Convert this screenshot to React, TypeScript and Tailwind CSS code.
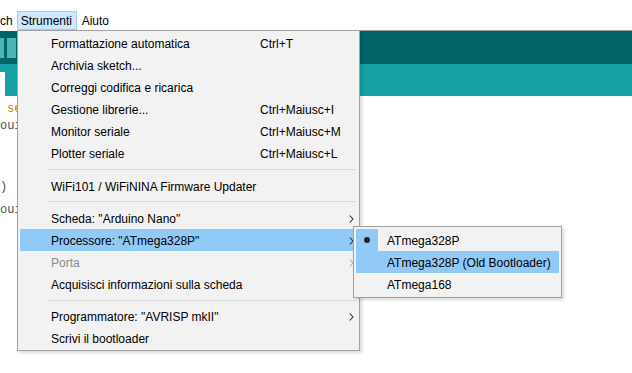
import React from 'react';

type Item =
    | { kind: 'item'; label: string; shortcut?: string; submenu?: boolean; disabled?: boolean; active?: boolean }
    | { kind: 'sep'; h: string };

const items: Item[] = [
    { kind: 'item', label: 'Formattazione automatica', shortcut: 'Ctrl+T' },
    { kind: 'item', label: 'Archivia sketch...' },
    { kind: 'item', label: 'Correggi codifica e ricarica' },
    { kind: 'item', label: 'Gestione librerie...', shortcut: 'Ctrl+Maiusc+I' },
    { kind: 'item', label: 'Monitor seriale', shortcut: 'Ctrl+Maiusc+M' },
    { kind: 'item', label: 'Plotter seriale', shortcut: 'Ctrl+Maiusc+L' },
    { kind: 'sep', h: 'h-[11px] pt-[5px]' },
    { kind: 'item', label: 'WiFi101 / WiFiNINA Firmware Updater' },
    { kind: 'sep', h: 'h-[10px] pt-[4px]' },
    { kind: 'item', label: 'Scheda: "Arduino Nano"', submenu: true },
    { kind: 'item', label: 'Processore: "ATmega328P"', submenu: true, active: true },
    { kind: 'item', label: 'Porta', submenu: true, disabled: true },
    { kind: 'item', label: 'Acquisisci informazioni sulla scheda' },
    { kind: 'sep', h: 'h-[10px] pt-[5px]' },
    { kind: 'item', label: 'Programmatore: "AVRISP mkII"', submenu: true },
    { kind: 'item', label: 'Scrivi il bootloader' },
];

const processors = [
    { label: 'ATmega328P', checked: true },
    { label: 'ATmega328P (Old Bootloader)', hover: true },
    { label: 'ATmega168' },
];

function Chevron({ color }: { color: string }) {
    return (
        <svg width="5" height="8" viewBox="0 0 5 8" className="absolute right-[3px] top-[8px]">
            <path d="M0.8 0.5 L4 4 L0.8 7.5" fill="none" stroke={color} strokeWidth="1.1" />
        </svg>
    );
}

export default function App() {
    const font = { fontFamily: '"Liberation Sans", Arial, sans-serif' };

    return (
        <div className="relative w-[632px] h-[373px] overflow-hidden bg-white text-[12px] text-black" style={font}>
            {/* window behind the menu */}
            <div className="flex flex-col h-full">
                <div className="h-[30px] pt-[11px] flex items-start">
                    <div className="h-[19px] leading-[21px] pl-0 pr-[4px]">ch</div>
                    <div className="h-[19px] leading-[19px] px-[3px] bg-[#cce8ff] border border-[#99d1ff] w-[60px]">Strumenti</div>
                    <div className="h-[19px] leading-[21px] px-[5px]">Aiuto</div>
                </div>
                <div className="h-px flex">
                    <div className="w-[17px] bg-white" />
                    <div className="flex-1 bg-[#a0a0a0]" />
                </div>
                <div className="h-[33px] bg-[#006468] flex items-start pt-[7px] gap-[3px]">
                    <div className="w-[4px] h-[20px] bg-[#4cb5b8]" />
                    <div className="w-[9px] h-[20px] bg-[#4cb5b8]" />
                </div>
                <div className="h-[32px] bg-[#17a1a5] flex items-end">
                    <div className="w-[5px] h-[24px] bg-white" />
                </div>
                <div className="flex-1 bg-white text-[12px] text-[#434f54]" style={{ fontFamily: '"Liberation Mono", monospace' }}>
                    <div className="h-[17px] leading-[17px] mt-[5px] pl-[7px] text-[#b8860b]">se</div>
                    <div className="h-[17px] leading-[17px]">oui</div>
                    <div className="h-[17px] leading-[17px] mt-[44px] flex">
                        <span className="w-[17px]">)</span>
                        <span className="text-[#d35400]">-</span>
                    </div>
                    <div className="h-[17px] leading-[17px] mt-[6px]">oui</div>
                </div>
            </div>

            {/* Strumenti dropdown */}
            <div className="absolute left-[17px] top-[30px] w-[343px] h-[321px] bg-[#f2f2f2] border border-[#a0a0a0] p-px px-[2px] shadow-[2px_2px_3px_rgba(0,0,0,0.15)]">
                {items.map((it, i) =>
                    it.kind === 'sep' ? (
                        <div key={i} className={`${it.h} pl-[28px] pr-[1px]`}>
                            <div className="h-px bg-[#d7d7d7]" />
                        </div>
                    ) : (
                        <div
                            key={i}
                            className={`relative h-[22px] leading-[24px] pl-[31px] ${it.active ? 'bg-[#91c9f7]' : ''} ${it.disabled ? 'text-[#8a8a8a]' : ''}`}
                        >
                            {it.label}
                            {it.shortcut && <span className="absolute left-[240px] top-0">{it.shortcut}</span>}
                            {it.submenu && <Chevron color={it.disabled ? '#b0b0b0' : '#333333'} />}
                        </div>
                    )
                )}
            </div>

            {/* Processore submenu */}
            <div className="absolute left-[353px] top-[226px] w-[209px] h-[72px] bg-[#f2f2f2] border border-[#a0a0a0] p-[2px] shadow-[2px_2px_3px_rgba(0,0,0,0.15)]">
                {processors.map((p, i) => (
                    <div key={i} className={`relative h-[22px] leading-[24px] pl-[31px] ${p.hover ? 'bg-[#91c9f7]' : ''}`}>
                        {p.checked && (
                            <div className="absolute left-0 top-0 w-[22px] h-[22px] bg-[#91c9f7] flex items-center justify-center">
                                <div className="w-[6px] h-[6px] rounded-full bg-[#222]" />
                            </div>
                        )}
                        {p.label}
                    </div>
                ))}
            </div>
        </div>
    );
}
